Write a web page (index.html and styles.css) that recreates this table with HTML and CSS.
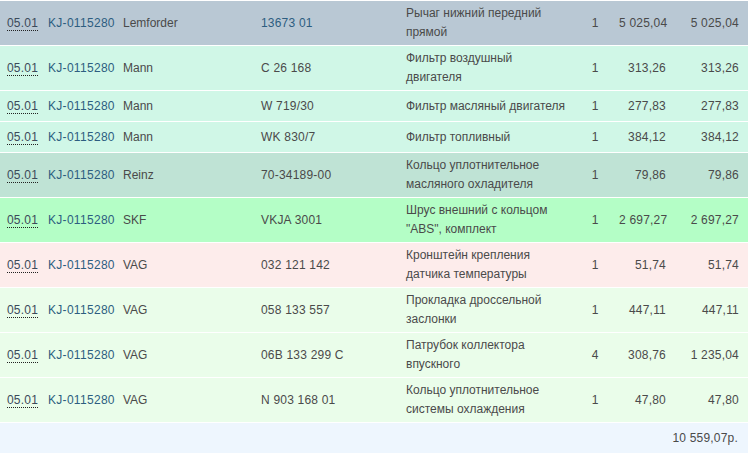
FILE: index.html
```html
<!DOCTYPE html>
<html>
<head>
<meta charset="utf-8">
<link rel="stylesheet" href="styles.css">
</head>
<body>
<table class="orders">
  <colgroup>
    <col class="c-date"><col class="c-code"><col class="c-brand"><col class="c-art"><col class="c-desc"><col class="c-qty"><col class="c-price"><col class="c-sum">
  </colgroup>
  <tbody>
    <tr class="r-gray">
      <td class="date"><span>05.01</span></td><td class="code">KJ-0115280</td><td>Lemforder</td><td class="art link">13673 01</td>
      <td class="desc">Рычаг нижний передний прямой</td><td class="qty">1</td><td class="num">5 025,04</td><td class="num last">5 025,04</td>
    </tr>
    <tr class="r-mint">
      <td class="date"><span>05.01</span></td><td class="code">KJ-0115280</td><td>Mann</td><td class="art">C 26 168</td>
      <td class="desc">Фильтр воздушный двигателя</td><td class="qty">1</td><td class="num">313,26</td><td class="num last">313,26</td>
    </tr>
    <tr class="r-mint">
      <td class="date"><span>05.01</span></td><td class="code">KJ-0115280</td><td>Mann</td><td class="art">W 719/30</td>
      <td class="desc">Фильтр масляный двигателя</td><td class="qty">1</td><td class="num">277,83</td><td class="num last">277,83</td>
    </tr>
    <tr class="r-mint">
      <td class="date"><span>05.01</span></td><td class="code">KJ-0115280</td><td>Mann</td><td class="art">WK 830/7</td>
      <td class="desc">Фильтр топливный</td><td class="qty">1</td><td class="num">384,12</td><td class="num last">384,12</td>
    </tr>
    <tr class="r-teal">
      <td class="date"><span>05.01</span></td><td class="code">KJ-0115280</td><td>Reinz</td><td class="art">70-34189-00</td>
      <td class="desc">Кольцо уплотнительное масляного охладителя</td><td class="qty">1</td><td class="num">79,86</td><td class="num last">79,86</td>
    </tr>
    <tr class="r-green">
      <td class="date"><span>05.01</span></td><td class="code">KJ-0115280</td><td>SKF</td><td class="art">VKJA 3001</td>
      <td class="desc">Шрус внешний с кольцом "ABS", комплект</td><td class="qty">1</td><td class="num">2 697,27</td><td class="num last">2 697,27</td>
    </tr>
    <tr class="r-pink">
      <td class="date"><span>05.01</span></td><td class="code">KJ-0115280</td><td>VAG</td><td class="art">032 121 142</td>
      <td class="desc">Кронштейн крепления датчика температуры</td><td class="qty">1</td><td class="num">51,74</td><td class="num last">51,74</td>
    </tr>
    <tr class="r-light">
      <td class="date"><span>05.01</span></td><td class="code">KJ-0115280</td><td>VAG</td><td class="art">058 133 557</td>
      <td class="desc">Прокладка дроссельной заслонки</td><td class="qty">1</td><td class="num">447,11</td><td class="num last">447,11</td>
    </tr>
    <tr class="r-light">
      <td class="date"><span>05.01</span></td><td class="code">KJ-0115280</td><td>VAG</td><td class="art">06B 133 299 C</td>
      <td class="desc">Патрубок коллектора впускного</td><td class="qty">4</td><td class="num">308,76</td><td class="num last">1 235,04</td>
    </tr>
    <tr class="r-light">
      <td class="date"><span>05.01</span></td><td class="code">KJ-0115280</td><td>VAG</td><td class="art">N 903 168 01</td>
      <td class="desc">Кольцо уплотнительное системы охлаждения</td><td class="qty">1</td><td class="num">47,80</td><td class="num last">47,80</td>
    </tr>
    <tr class="r-foot">
      <td colspan="8" class="total">10 559,07р.</td>
    </tr>
  </tbody>
</table>
</body>
</html>
```
FILE: styles.css
```css
html, body {
  margin: 0;
  padding: 0;
  background: #ffffff;
}
body {
  font-family: "Liberation Sans", Arial, sans-serif;
  font-size: 12px;
  color: #4a4a4a;
}
.orders {
  width: 748px;
  border-collapse: collapse;
  table-layout: fixed;
  border-top: 1px solid #ffffff;
}
.c-date { width: 43px; }
.c-code { width: 75px; }
.c-brand { width: 138px; }
.c-art { width: 145px; }
.c-desc { width: 175px; }
.c-qty { width: 38px; }
.c-price { width: 57px; }
.c-sum { width: 77px; }

.orders td {
  padding: 6px 5px;
  line-height: 18px;
  height: 18px;
  vertical-align: middle;
  border-bottom: 1px solid #ffffff;
  white-space: nowrap;
}
.orders td.date { padding-left: 7px; padding-right: 3px; }
.date span {
  color: #3c4a5a;
  border-bottom: 1px dotted #222222;
  letter-spacing: 0.2px;
}
.code { color: #2d5d80; letter-spacing: 0.3px; }
.art { letter-spacing: 0.2px; }
.art.link { color: #2d5d80; }
.orders td.desc {
  padding: 3px 5px;
  line-height: 19px;
  white-space: normal;
}
.qty { text-align: center; }
.num { text-align: right; letter-spacing: 0.2px; }
.orders td.last { padding-right: 9px; }

.r-gray td { background: #b9c8d4; }
.r-mint td { background: #d0f7e7; }
.r-teal td { background: #bfe3d5; }
.r-green td { background: #b4fec6; }
.r-pink td { background: #fdeceb; }
.r-light td { background: #eafdea; }
.r-foot td { background: #eef6fe; }

.orders td.total {
  text-align: right;
  padding-right: 10px;
  border-bottom: 0;
  height: 18px;
  letter-spacing: 0.2px;
}
```
